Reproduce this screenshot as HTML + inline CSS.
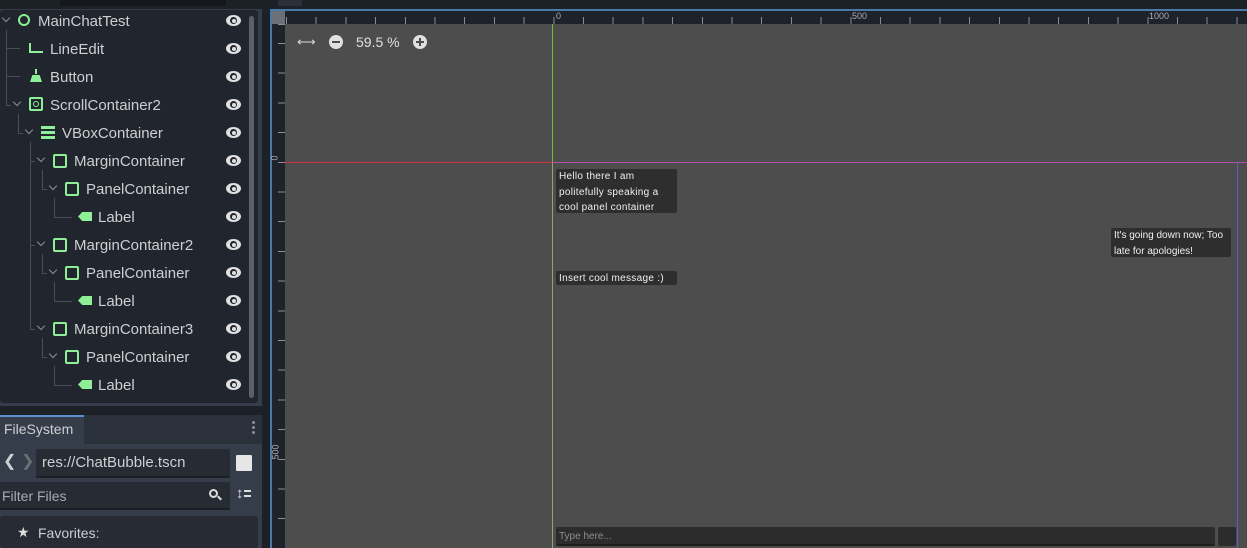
<!DOCTYPE html><html><head><style>
*{margin:0;padding:0;box-sizing:border-box}
body{width:1247px;height:548px;overflow:hidden;background:#1c2027;font-family:"Liberation Sans",sans-serif;position:relative}
.a{position:absolute}
.t{position:absolute;color:#cdcfd2;font-size:15px;line-height:16px}
.tr{margin-top:2px}
.arr{position:absolute;width:6px;height:6px;border-right:1.5px solid #8a8f96;border-bottom:1.5px solid #8a8f96;transform:rotate(45deg)}
.ln{position:absolute;background:#4a4f57}
.eye{position:absolute;left:226px;width:15px;height:11px;border-radius:50%/50%;background:#e0e0e0}
.eye::after{content:"";position:absolute;left:4px;top:2px;width:7px;height:7px;border-radius:50%;background:#21252d}
.eye::before{content:"";position:absolute;left:5.5px;top:3.5px;width:4px;height:4px;border-radius:50%;background:#e0e0e0;z-index:2}
.box{position:absolute;border:2px solid #8eef97;border-radius:2px}
.bub{position:absolute;background:#2e2e2e;color:#f0f0f0;font-size:10px;line-height:15.5px;padding:0 8px 0 3px;letter-spacing:0.3px;border-radius:2px}
</style></head><body>
<div class="a" style="left:60px;top:0;width:166px;height:6px;background:#14171c"></div>
<div class="a" style="left:278px;top:0;width:24px;height:6px;background:#2a2f38"></div>
<div class="a" style="left:0;top:9px;width:262px;height:397px;background:#363d4a"></div>
<div class="a" style="left:0;top:10px;width:258px;height:393px;background:#21252d;border-radius:3px"></div>
<div class="a" style="left:249px;top:16px;width:5px;height:382px;background:#5c6168;border-radius:3px"></div>
<div class="ln" style="left:6px;top:30px;width:1px;height:76px"></div>
<div class="ln" style="left:6px;top:48px;width:14px;height:1px"></div>
<div class="ln" style="left:6px;top:76px;width:14px;height:1px"></div>
<div class="ln" style="left:6px;top:105px;width:5px;height:1px"></div>
<div class="ln" style="left:18px;top:114px;width:1px;height:19px"></div>
<div class="ln" style="left:18px;top:133px;width:5px;height:1px"></div>
<div class="ln" style="left:30px;top:142px;width:1px;height:188px"></div>
<div class="ln" style="left:30px;top:161px;width:5px;height:1px"></div>
<div class="ln" style="left:30px;top:245px;width:5px;height:1px"></div>
<div class="ln" style="left:30px;top:329px;width:5px;height:1px"></div>
<div class="ln" style="left:42px;top:170px;width:1px;height:19px"></div><div class="ln" style="left:42px;top:189px;width:5px;height:1px"></div>
<div class="ln" style="left:42px;top:254px;width:1px;height:19px"></div><div class="ln" style="left:42px;top:273px;width:5px;height:1px"></div>
<div class="ln" style="left:42px;top:338px;width:1px;height:19px"></div><div class="ln" style="left:42px;top:357px;width:5px;height:1px"></div>
<div class="ln" style="left:54px;top:198px;width:1px;height:19px"></div><div class="ln" style="left:54px;top:217px;width:18px;height:1px"></div>
<div class="ln" style="left:54px;top:282px;width:1px;height:19px"></div><div class="ln" style="left:54px;top:301px;width:18px;height:1px"></div>
<div class="ln" style="left:54px;top:366px;width:1px;height:19px"></div><div class="ln" style="left:54px;top:385px;width:18px;height:1px"></div>
<div class="arr" style="left:3px;top:15px"></div>
<div class="arr" style="left:14px;top:99px"></div>
<div class="arr" style="left:26px;top:127px"></div>
<div class="arr" style="left:38px;top:155px"></div>
<div class="arr" style="left:50px;top:183px"></div>
<div class="arr" style="left:38px;top:239px"></div>
<div class="arr" style="left:50px;top:267px"></div>
<div class="arr" style="left:38px;top:323px"></div>
<div class="arr" style="left:50px;top:351px"></div>
<div class="a" style="left:18px;top:14px;width:12px;height:12px;border:2px solid #8eef97;border-radius:50%"></div>
<div class="a" style="left:29px;top:43px;width:2px;height:8px;background:#8eef97"></div><div class="a" style="left:29px;top:51px;width:14px;height:2px;background:#8eef97"></div>
<div class="a" style="left:30px;top:75px;width:12px;height:7px;background:#8eef97;clip-path:polygon(20% 0,80% 0,100% 100%,0 100%)"></div><div class="a" style="left:35px;top:69px;width:2px;height:5px;background:#8eef97"></div>
<div class="box" style="left:29px;top:97px;width:14px;height:14px"></div><div class="a" style="left:33px;top:101px;width:6px;height:6px;border:1.5px solid #8eef97;border-radius:50%"></div>
<div class="a" style="left:41px;top:126px;width:14px;height:14px;background:repeating-linear-gradient(#8eef97 0 3px,#21252d 3px 5px)"></div>
<div class="box" style="left:53px;top:154px;width:14px;height:14px"></div>
<div class="box" style="left:65px;top:182px;width:14px;height:14px"></div>
<div class="a" style="left:78px;top:212px;width:14px;height:9px;background:#8eef97;clip-path:polygon(30% 0,100% 0,100% 100%,30% 100%,0 50%)"></div>
<div class="box" style="left:53px;top:238px;width:14px;height:14px"></div>
<div class="box" style="left:65px;top:266px;width:14px;height:14px"></div>
<div class="a" style="left:78px;top:296px;width:14px;height:9px;background:#8eef97;clip-path:polygon(30% 0,100% 0,100% 100%,30% 100%,0 50%)"></div>
<div class="box" style="left:53px;top:322px;width:14px;height:14px"></div>
<div class="box" style="left:65px;top:350px;width:14px;height:14px"></div>
<div class="a" style="left:78px;top:380px;width:14px;height:9px;background:#8eef97;clip-path:polygon(30% 0,100% 0,100% 100%,30% 100%,0 50%)"></div>
<div class="t tr" style="left:38px;top:12px">MainChatTest</div>
<div class="t tr" style="left:50px;top:40px">LineEdit</div>
<div class="t tr" style="left:50px;top:68px">Button</div>
<div class="t tr" style="left:50px;top:96px">ScrollContainer2</div>
<div class="t tr" style="left:62px;top:124px">VBoxContainer</div>
<div class="t tr" style="left:74px;top:152px">MarginContainer</div>
<div class="t tr" style="left:86px;top:180px">PanelContainer</div>
<div class="t tr" style="left:98px;top:208px">Label</div>
<div class="t tr" style="left:74px;top:236px">MarginContainer2</div>
<div class="t tr" style="left:86px;top:264px">PanelContainer</div>
<div class="t tr" style="left:98px;top:292px">Label</div>
<div class="t tr" style="left:74px;top:320px">MarginContainer3</div>
<div class="t tr" style="left:86px;top:348px">PanelContainer</div>
<div class="t tr" style="left:98px;top:376px">Label</div>
<div class="eye" style="top:15px"></div><div class="eye" style="top:43px"></div><div class="eye" style="top:71px"></div><div class="eye" style="top:99px"></div><div class="eye" style="top:127px"></div><div class="eye" style="top:155px"></div><div class="eye" style="top:183px"></div><div class="eye" style="top:211px"></div><div class="eye" style="top:239px"></div><div class="eye" style="top:267px"></div><div class="eye" style="top:295px"></div><div class="eye" style="top:323px"></div><div class="eye" style="top:351px"></div><div class="eye" style="top:379px"></div>
<div class="a" style="left:0;top:415px;width:262px;height:133px;background:#2b313b"></div>
<div class="a" style="left:0;top:444px;width:262px;height:104px;background:#363d4a"></div>
<div class="a" style="left:0;top:415px;width:84px;height:29px;background:#363d4a;border-top:2px solid #5a8fd0"></div>
<div class="t" style="left:4px;top:421px;font-size:14px">FileSystem</div>
<div class="a" style="left:252px;top:421px;width:3px;height:3px;border-radius:50%;background:#8a8f96;box-shadow:0 5px #8a8f96,0 10px #8a8f96"></div>
<div class="t" style="left:3px;top:454px;font-size:16px">&#10094;</div>
<div class="t" style="left:21px;top:454px;font-size:16px;color:#6a6f76">&#10095;</div>
<div class="a" style="left:36px;top:449px;width:194px;height:29px;background:#262b34;border-bottom:2px solid #1b1f25;border-radius:2px"></div>
<div class="t" style="left:42px;top:455px">res://ChatBubble.tscn</div>
<div class="a" style="left:236px;top:455px;width:16px;height:16px;background:#e6e6e6;border-radius:1px"></div>
<div class="a" style="left:0;top:482px;width:230px;height:28px;background:#262b34;border-bottom:2px solid #1b1f25"></div>
<div class="t" style="left:2px;top:488px;font-size:14px;color:#a8abaf">Filter Files</div>
<div class="a" style="left:209px;top:489px;width:9px;height:9px;border:2px solid #ddd;border-radius:50%"></div><div class="a" style="left:217px;top:497px;width:5px;height:2px;background:#ddd;transform:rotate(45deg)"></div>
<div class="t" style="left:236px;top:486px;font-size:15px;color:#ddd">&#8597;</div><div class="a" style="left:244px;top:490px;width:7px;height:2px;background:#ddd;box-shadow:0 5px #ddd"></div>
<div class="a" style="left:0;top:516px;width:258px;height:32px;background:#262b34;border-radius:3px"></div>
<div class="t" style="left:17px;top:524px;font-size:14px;color:#ddd">&#9733;</div>
<div class="t" style="left:38px;top:525px;font-size:14px">Favorites:</div>
<div class="a" style="left:270px;top:9px;width:977px;height:539px;background:#1e222a;border-top:2px solid #4a79a8;border-left:2px solid #4a79a8"></div>
<div class="a" style="left:272px;top:11px;width:13px;height:13px;background:#6b7079"></div>
<div class="a" style="left:285px;top:24px;width:962px;height:524px;background:#4d4d4d"></div>
<div class="a" style="left:285px;top:17px;width:962px;height:7px;background:repeating-linear-gradient(90deg,#8a8e95 0 1px,transparent 1px 29.7px);background-position:1px 0"></div>
<div class="a" style="left:278px;top:24px;width:7px;height:524px;background:repeating-linear-gradient(#8a8e95 0 1px,transparent 1px 29.7px);background-position:0 19px"></div>
<div class="a" style="color:#a8abb0;font-size:9px;left:556px;top:11px">0</div>
<div class="a" style="color:#a8abb0;font-size:9px;left:852px;top:11px">500</div>
<div class="a" style="color:#a8abb0;font-size:9px;left:1149px;top:11px">1000</div>
<div class="a" style="color:#a8abb0;font-size:9px;left:272px;top:153px;transform:rotate(-90deg)">0</div>
<div class="a" style="color:#a8abb0;font-size:9px;left:268px;top:447px;transform:rotate(-90deg)">500</div>
<div class="t" style="left:297px;top:34px;font-size:13px;color:#ddd">&#10231;</div>
<div class="a" style="left:329px;top:35px;width:14px;height:14px;border-radius:50%;background:#e0e0e0"></div><div class="a" style="left:332px;top:41px;width:8px;height:2px;background:#4d4d4d"></div>
<div class="t" style="left:356px;top:34px;font-size:14px;color:#e0e0e0">59.5 %</div>
<div class="a" style="left:413px;top:35px;width:14px;height:14px;border-radius:50%;background:#e0e0e0"></div><div class="a" style="left:416px;top:41px;width:8px;height:2px;background:#4d4d4d"></div><div class="a" style="left:419px;top:38px;width:2px;height:8px;background:#4d4d4d"></div>
<div class="a" style="left:552px;top:24px;width:1px;height:138px;background:#7ab82c"></div>
<div class="a" style="left:552px;top:162px;width:1px;height:386px;background:#8aa878"></div>
<div class="a" style="left:285px;top:162px;width:267px;height:1px;background:#d03040"></div>
<div class="a" style="left:552px;top:162px;width:695px;height:1px;background:#b050b0"></div>
<div class="a" style="left:1237px;top:162px;width:1px;height:386px;background:#6a5ab8"></div>
<div class="bub" style="left:556px;top:169px;width:121px;height:44px">Hello there I am politefully speaking a cool panel container</div>
<div class="bub" style="left:1111px;top:228px;width:120px;height:29px;padding-right:3px;letter-spacing:0">It's going down now; Too late for apologies!</div>
<div class="bub" style="left:556px;top:271px;width:121px;height:14px;line-height:15px">Insert cool message :)</div>
<div class="a" style="left:556px;top:527px;width:659px;height:19px;background:#2c2c2c;border-bottom:2px solid #1e1e1e;border-radius:2px;color:#8f8f8f;font-size:10px;line-height:20px;padding-left:3px">Type here...</div>
<div class="a" style="left:1218px;top:527px;width:18px;height:19px;background:#2c2c2c;border-radius:2px"></div>
</body></html>
